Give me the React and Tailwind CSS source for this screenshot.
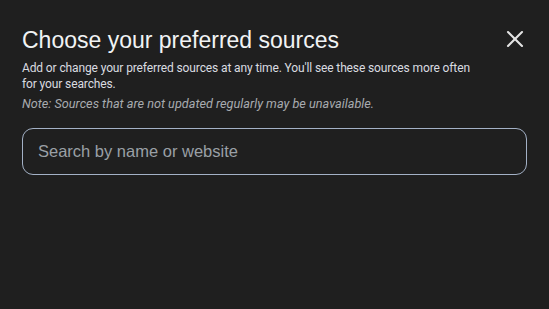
import { X } from 'lucide-react'

export default function App() {
  return (
    <div className="w-[549px] h-[309px] bg-[#1f1f1f] overflow-hidden" style={{ fontFamily: '"Liberation Sans", Arial, sans-serif' }}>
      <div className="px-[22px] pt-[26px]">
        <div className="flex items-start justify-between">
          <h2 className="text-[23px] leading-[28px] text-[#f1f3f4]">Choose your preferred sources</h2>
          <button className="mt-[-1px] mr-[-2px] text-[#e3e3e3]">
            <X size={28} strokeWidth={1.8} />
          </button>
        </div>
        <p className="mt-[6px] text-[12px] tracking-[-0.12px] leading-[16px] text-[#dadce0] max-w-[455px]" style={{ fontFamily: 'Roboto, Arial, sans-serif' }}>
          Add or change your preferred sources at any time. You'll see these sources more often for your searches.
        </p>
        <p className="mt-[4px] text-[12.7px] leading-[16px] italic text-[#a8abaf]" style={{ fontFamily: 'Roboto, Arial, sans-serif' }}>
          Note: Sources that are not updated regularly may be unavailable.
        </p>
        <div className="mt-[16px] h-[47px] rounded-[11px] border border-[#a3b1c6] flex items-center px-[15px]">
          <span className="text-[16.5px] text-[#9aa0a6]">Search by name or website</span>
        </div>
      </div>
    </div>
  )
}
